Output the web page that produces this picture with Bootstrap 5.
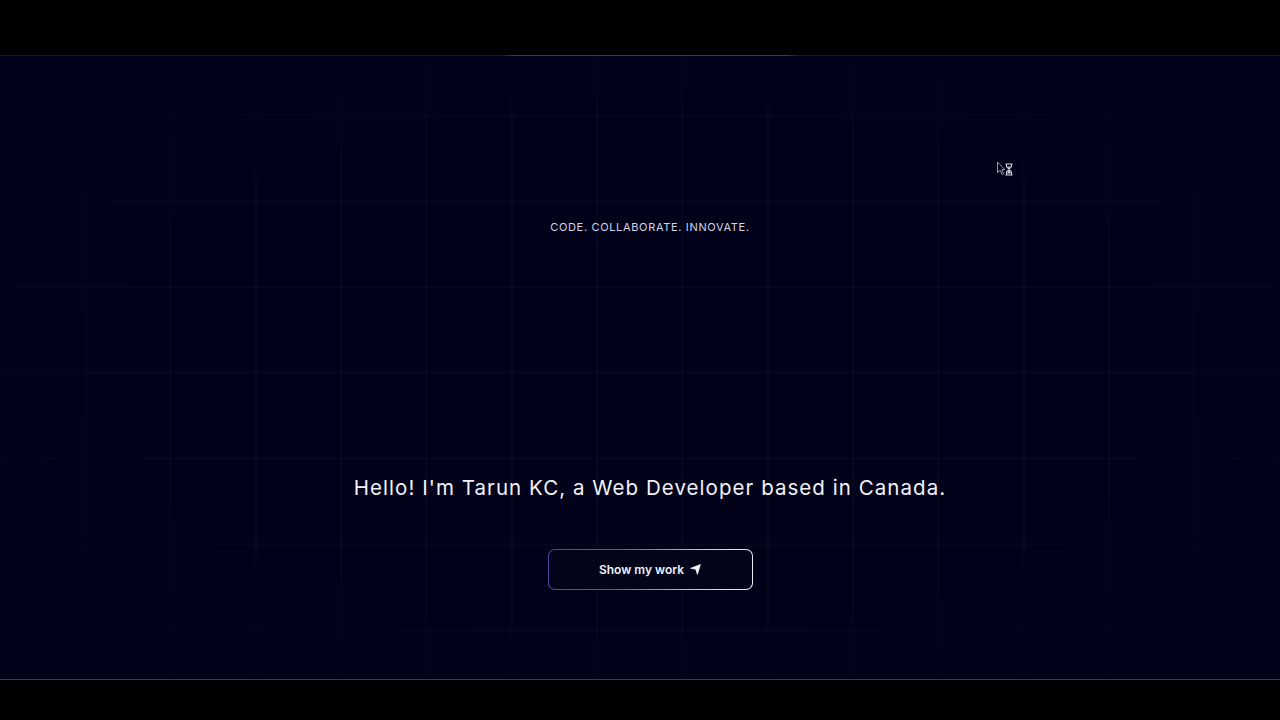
<!DOCTYPE html>
<html lang="en">
<head>
<meta charset="utf-8">
<title>Tarun KC</title>
<link rel="stylesheet" href="https://cdn.jsdelivr.net/npm/bootstrap@5.3.0/dist/css/bootstrap.min.css">
<style>
html, body { height: 100%; background: #000; overflow: hidden; }
body { font-family: Inter, "Liberation Sans", sans-serif; }
.frame-bar-top { height: 55px; background: #000; }
.frame-bar-bottom { height: 41px; background: #000; border-top: 1px solid #3b3a4c; }
.stage {
  flex: 1 1 auto;
  position: relative;
  background-color: #01011a;
  background-image:
    linear-gradient(90deg, transparent, #3a3d54 5%, #3a3d54 95%, transparent),
    linear-gradient(90deg, #14162a, #14162a),
    radial-gradient(ellipse 66% 66% at 50% 50%, rgba(1,1,26,0) 60%, #01011a 100%),
    linear-gradient(90deg, rgba(255,255,255,.018) 2px, transparent 2px),
    linear-gradient(180deg, rgba(255,255,255,.018) 2px, transparent 2px);
  background-size: 300px 1px, 100% 1px, 100% 100%, 85.333px 85.75px, 85.333px 85.75px;
  background-position: 500px 0, 0 0, 0 0, -1px 0, 0 59.5px;
  background-repeat: no-repeat, no-repeat, no-repeat, repeat, repeat;
}
.tagline {
  margin: 0 0 238px;
  font-size: 11px;
  line-height: 16px;
  letter-spacing: .66px;
  color: #d3d5e6;
  font-weight: 400;
}
.hero-title {
  margin: 0 0 46px;
  font-size: 20.5px;
  line-height: 30px;
  font-weight: 400;
  letter-spacing: 1.05px;
  color: #f1f2f8;
}
.work-btn {
  width: 205px;
  height: 41px;
  padding: 0;
  gap: 6px;
  border: 1px solid transparent;
  border-radius: 7px;
  background:
    linear-gradient(#03041a, #03041a) padding-box,
    linear-gradient(100deg, #4a45a0 0%, #5f5aac 35%, #c9c9e0 75%, #efeff8 100%) border-box;
  color: #eef0f7;
  font-size: 12px;
  font-weight: 600;
}
.work-btn:hover { color: #fff; }
.stage-inner { padding: 164px 0 0 20px; }
.cursor-glyph { position: absolute; left: 996px; top: 106px; }
</style>
</head>
<body class="d-flex flex-column">
<div class="frame-bar-top"></div>
<main class="stage d-flex flex-column">
  <div class="stage-inner d-flex flex-column align-items-center text-center">
    <p class="tagline">CODE. COLLABORATE. INNOVATE.</p>
    <h1 class="hero-title">Hello! I'm Tarun KC, a Web Developer based in Canada.</h1>
    <button type="button" class="btn work-btn d-inline-flex align-items-center justify-content-center">
      <span>Show my work</span>
      <svg width="11" height="11" viewBox="0 0 11 11" aria-hidden="true"><path d="M10.400.600 7.400 10.400 5.800 5.300.600 4.300Z" fill="#f4f5fb" stroke="#f4f5fb" stroke-width=".7" stroke-linejoin="round"/></svg>
    </button>
  </div>
  <svg class="cursor-glyph" width="17" height="16" viewBox="0 0 17 16" aria-hidden="true">
    <path d="M1.500 1v10.500l2.600-2.200 2 4.200 1.600-.8-1.900-4h3.200Z" fill="#01011a" stroke="#a9abbb" stroke-width=".9"/>
    <path d="M9.500 3h7M9.500 14h7M10.500 3.500v2l5 5.500v2.500M15.500 3.500v2l-5 5.500v2.500" fill="none" stroke="#d4d5e0" stroke-width="1.100"/>
    <path d="M11.500 5.500h3l-1.500 2ZM13 9l-2 3.500h4Z" fill="#d4d5e0"/>
  </svg>
</main>
<div class="frame-bar-bottom"></div>
<script src="https://cdn.jsdelivr.net/npm/bootstrap@5.3.0/dist/js/bootstrap.bundle.min.js"></script>
</body>
</html>
